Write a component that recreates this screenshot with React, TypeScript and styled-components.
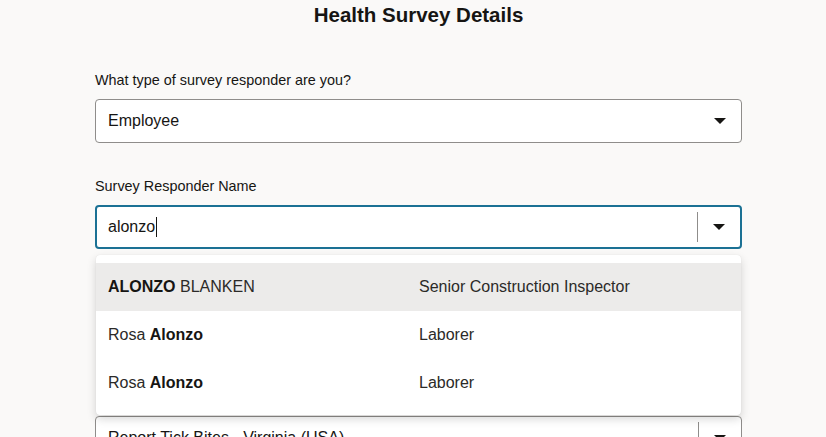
import React from "react";
import styled, { createGlobalStyle } from "styled-components";

const GlobalStyle = createGlobalStyle`
  html, body {
    margin: 0;
    padding: 0;
    background: #faf9f8;
  }
  body {
    font-family: "Liberation Sans", Arial, sans-serif;
    color: #161513;
    overflow: hidden;
  }
`;

const Page = styled.div`
  width: 826px;
  height: 437px;
  overflow: hidden;
  background: #faf9f8;
`;

const Form = styled.div`
  width: 647px;
  margin-left: 95px;
  display: flex;
  flex-direction: column;
`;

const Title = styled.h1`
  margin: 0;
  padding-top: 3px;
  font-size: 20.5px;
  line-height: 24px;
  font-weight: 700;
  text-align: center;
  color: #161513;
`;

const Field = styled.div<{ $gap: number }>`
  display: flex;
  flex-direction: column;
  margin-top: ${(p) => p.$gap}px;
`;

const Label = styled.label`
  font-size: 14.4px;
  line-height: 17px;
  color: #161513;
  margin-bottom: 10px;
`;

const Anchor = styled.div`
  position: relative;
`;

const Box = styled.div<{ $focused?: boolean }>`
  box-sizing: border-box;
  height: 44px;
  display: flex;
  align-items: center;
  background: #fff;
  border-radius: 4px;
  border: ${(p) => (p.$focused ? "2px solid #1b7194" : "1px solid #8f8d8b")};
  padding-left: ${(p) => (p.$focused ? 11 : 12)}px;
  font-size: 16px;
  color: #161513;
`;

const Value = styled.div`
  flex: 1;
  display: flex;
  align-items: center;
  white-space: nowrap;
`;

const Caret = styled.span`
  display: inline-block;
  width: 1px;
  height: 20px;
  margin-left: 1px;
  background: #161513;
`;

const Divider = styled.span`
  width: 1px;
  align-self: stretch;
  margin: 5px 0;
  background: #8f8d8b;
`;

const ArrowSlot = styled.div`
  width: 42px;
  display: flex;
  justify-content: center;
  align-items: center;
`;

const Arrow = () => (
  <svg width="12" height="6" viewBox="0 0 12 6">
    <path d="M0 0 L12 0 L6 6 Z" fill="#161513" />
  </svg>
);

const Listbox = styled.div`
  position: absolute;
  top: 50px;
  left: 1px;
  right: 1px;
  padding: 8px 0;
  background: #fff;
  border-radius: 4px;
  box-shadow: 0 4px 10px rgba(0, 0, 0, 0.16), 0 0 1px rgba(0, 0, 0, 0.12);
  z-index: 2;
`;

const Option = styled.div<{ $active?: boolean }>`
  display: grid;
  grid-template-columns: 311px 1fr;
  align-items: center;
  height: 48px;
  padding-left: 12px;
  font-size: 16px;
  color: #2b2a28;
  background: ${(p) => (p.$active ? "#ecebea" : "#fff")};
`;

const Match = styled.b`
  font-weight: 700;
  color: #161513;
`;

type Item = { before: string; match: string; after: string; job: string };

const items: Item[] = [
  { before: "", match: "ALONZO", after: " BLANKEN", job: "Senior Construction Inspector" },
  { before: "Rosa ", match: "Alonzo", after: "", job: "Laborer" },
  { before: "Rosa ", match: "Alonzo", after: "", job: "Laborer" },
];

export default function App() {
  return (
    <Page>
      <GlobalStyle />
      <Form>
        <Title>Health Survey Details</Title>

        <Field $gap={45}>
          <Label>What type of survey responder are you?</Label>
          <Box>
            <Value>Employee</Value>
            <ArrowSlot>
              <Arrow />
            </ArrowSlot>
          </Box>
        </Field>

        <Field $gap={35}>
          <Label>Survey Responder Name</Label>
          <Anchor>
            <Box $focused>
              <Value>
                alonzo
                <Caret />
              </Value>
              <Divider />
              <ArrowSlot>
                <Arrow />
              </ArrowSlot>
            </Box>
            <Listbox role="listbox">
              {items.map((it, i) => (
                <Option key={i} $active={i === 0} role="option">
                  <span>
                    {it.before}
                    <Match>{it.match}</Match>
                    {it.after}
                  </span>
                  <span>{it.job}</span>
                </Option>
              ))}
            </Listbox>
          </Anchor>
        </Field>

        <Field $gap={167}>
          <Box aria-label="Survey">
            <Value>Report Tick Bites - Virginia (USA)</Value>
            <Divider />
            <ArrowSlot>
              <Arrow />
            </ArrowSlot>
          </Box>
        </Field>
      </Form>
    </Page>
  );
}
